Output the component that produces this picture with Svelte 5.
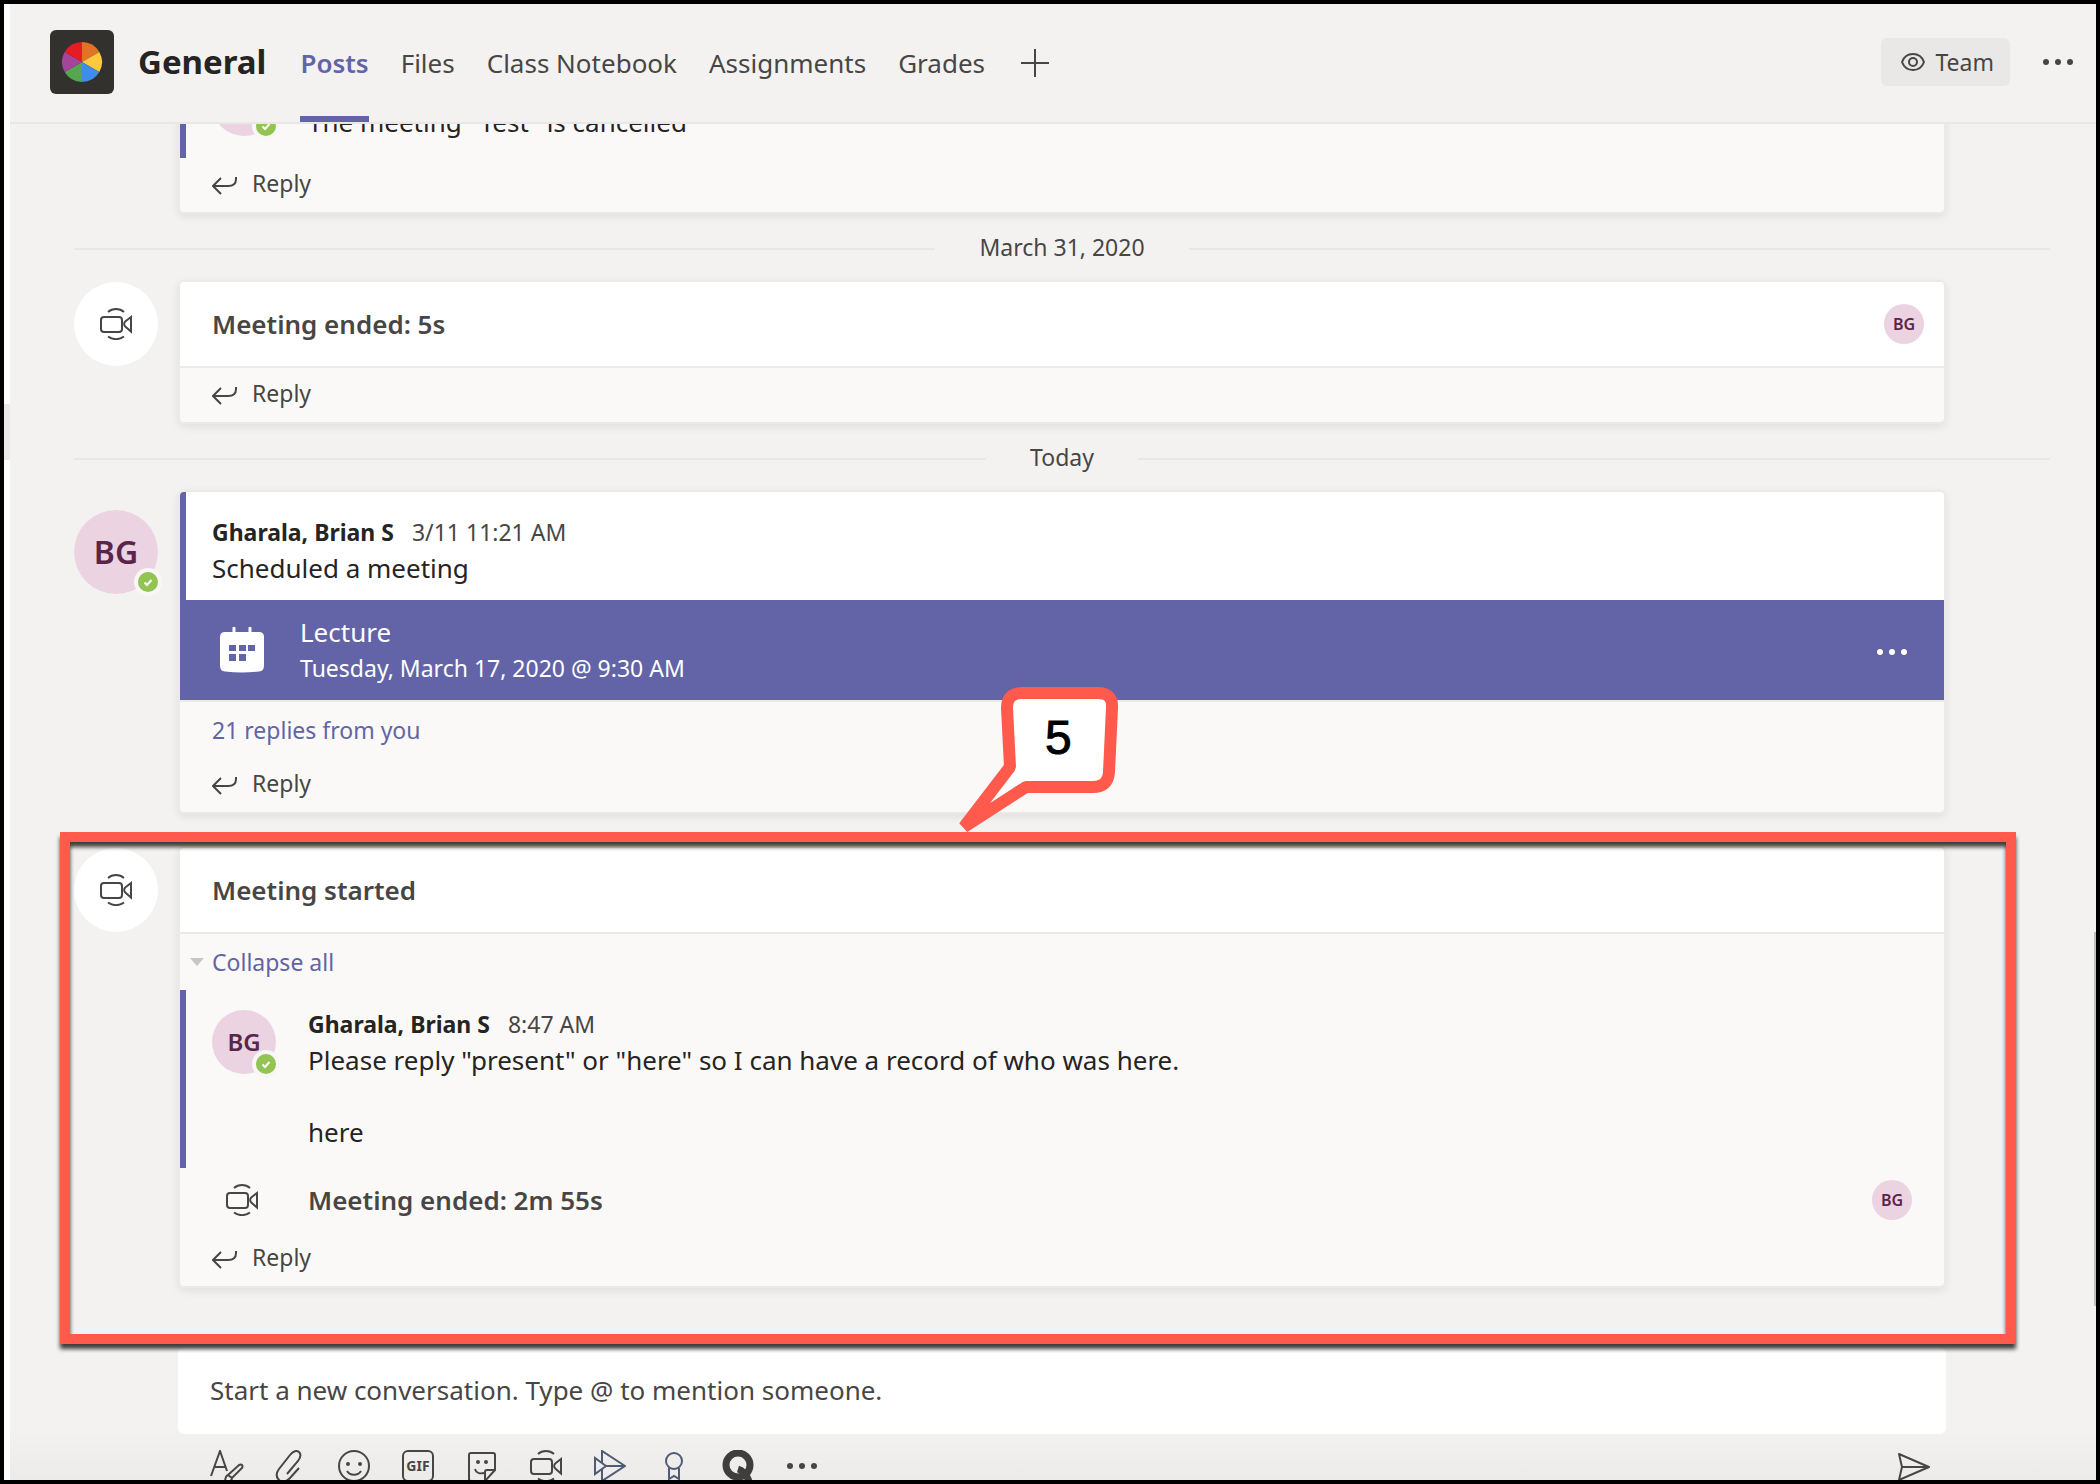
<script lang="ts">
	const tabs = ['Posts', 'Files', 'Class Notebook', 'Assignments', 'Grades'];
	let active = $state('Posts');
	let draft = $state('');
</script>

{#snippet dots()}
	<svg width="32" height="32" viewBox="0 0 32 32" fill="currentColor" aria-hidden="true">
		<circle cx="4" cy="16" r="3" />
		<circle cx="16" cy="16" r="3" />
		<circle cx="28" cy="16" r="3" />
	</svg>
{/snippet}

{#snippet camera()}
	<svg width="32" height="32" viewBox="0 0 32 32" class="line" aria-hidden="true">
		<rect x="1" y="9" width="21" height="15" rx="3" />
		<path d="M31 9v14.500l-5.500-4.700c-1.800-1.600-1.800-4 0-5.500z" />
		<path d="M8 4c4.500-4 11.500-4 16 0M8 28.500c4.500 3.500 11.500 3.500 16 0" />
	</svg>
{/snippet}

{#snippet badge()}
	<span class="badge">
		<svg width="20" height="20" viewBox="0 0 20 20" aria-label="Available">
			<circle cx="10" cy="10" r="10" fill="#92c353" />
			<path d="M6.500 10.500l2.500 2.500 4.500-5" fill="none" stroke="#fff" stroke-width="2" />
		</svg>
	</span>
{/snippet}

{#snippet reply()}
	<button class="reply">
		<svg width="25" height="20" viewBox="0 0 25 20" class="line" aria-hidden="true">
			<path d="M24 2v2c0 5-3 7-8 7H1M9 3L1 11l8 8" />
		</svg>
		Reply
	</button>
{/snippet}

{#snippet divider(label: string)}
	<div class="divider"><span>{label}</span></div>
{/snippet}

<div class="window">
	<div class="rail"><span></span></div>
	<main class="channel">
		<header>
			<svg class="logo" width="64" height="64" viewBox="0 0 64 64" aria-label="Team picture">
				<rect width="64" height="64" rx="6" fill="#33312e" />
				<path d="M32 32V12A20 20 0 0 1 49.300 22z" fill="#e27325" />
				<path d="M32 32L49.300 22A20 20 0 0 1 49.300 42z" fill="#ffc83d" />
				<path d="M32 32L49.300 42A20 20 0 0 1 32 52z" fill="#3e8ded" />
				<path d="M32 32V52A20 20 0 0 1 14.700 42z" fill="#55a64e" />
				<path d="M32 32L14.700 42A20 20 0 0 1 14.700 22z" fill="#a4459b" />
				<path d="M32 32L14.700 22A20 20 0 0 1 32 12z" fill="#e61b24" />
			</svg>
			<h1>General</h1>
			<nav>
				{#each tabs as tab}
					<button class:active={tab === active} onclick={() => (active = tab)}>{tab}</button>
				{/each}
				<button class="add" aria-label="Add a tab">
					<svg width="28" height="28" viewBox="0 0 28 28" class="line" aria-hidden="true">
						<path d="M14 0v28M0 14h28" />
					</svg>
				</button>
			</nav>
			<button class="team">
				<svg width="24" height="18" viewBox="0 0 24 18" class="line" aria-hidden="true">
					<path d="M1 9C3 3.500 7 1 12 1s9 2.500 11 8c-2 5.500-6 8-11 8S3 14.500 1 9z" />
					<circle cx="12" cy="9" r="4" />
				</svg>
				Team
			</button>
			<button class="more" aria-label="More options">{@render dots()}</button>
		</header>

		<section class="posts">
			<article class="post">
				<div class="card">
					<div class="comment">
						<div class="avatar medium">BG{@render badge()}</div>
						<p class="continued">The meeting "Test" is cancelled</p>
					</div>
					{@render reply()}
				</div>
			</article>

			{@render divider('March 31, 2020')}

			<article class="post">
				<div class="avatar system">{@render camera()}</div>
				<div class="card">
					<div class="title">
						<h2>Meeting ended: 5s</h2>
						<span class="avatar small">BG</span>
					</div>
					{@render reply()}
				</div>
			</article>

			{@render divider('Today')}

			<article class="post">
				<div class="avatar large">BG{@render badge()}</div>
				<div class="card">
					<div class="message">
						<p class="meta"><b>Gharala, Brian S</b> <time>3/11 11:21 AM</time></p>
						<p>Scheduled a meeting</p>
					</div>
					<div class="event">
						<svg width="44" height="46" viewBox="0 0 44 46" aria-hidden="true">
							<path
								d="M5 5h34q5 0 5 5v29q0 5-5 5.500-17 2-34 0-5-.5-5-5.500V10q0-5 5-5z"
								fill="#fff"
							/>
							<path d="M14 7V1M30 7V1" stroke="#fff" stroke-width="3" stroke-linecap="round" />
							<path
								d="M9 18h7v6H9zM19 18h7v6h-7zM28 18h7v6h-7zM9 27h7v7H9zM19 27h7v7h-7z"
								fill="#6264a7"
							/>
						</svg>
						<div>
							<h3>Lecture</h3>
							<time>Tuesday, March 17, 2020 @ 9:30 AM</time>
						</div>
						<button class="more" aria-label="Meeting options">{@render dots()}</button>
					</div>
					<a class="thread" href="#replies">21 replies from you</a>
					{@render reply()}
				</div>
			</article>

			<article class="post">
				<div class="avatar system">{@render camera()}</div>
				<div class="card">
					<div class="title">
						<h2>Meeting started</h2>
					</div>
					<a class="thread collapse" href="#collapse">Collapse all</a>
					<div class="comment">
						<div class="avatar medium">BG{@render badge()}</div>
						<div>
							<p class="meta"><b>Gharala, Brian S</b> <time>8:47 AM</time></p>
							<p>Please reply "present" or "here" so I can have a record of who was here.</p>
							<p><br /></p>
							<p>here</p>
						</div>
					</div>
					<div class="ended">
						{@render camera()}
						<h2>Meeting ended: 2m 55s</h2>
						<span class="avatar small">BG</span>
					</div>
					{@render reply()}
				</div>

				<div class="highlight"></div>
				<div class="callout">
					<svg width="166" height="150" viewBox="0 0 166 150" aria-hidden="true">
						<path
							d="M68 7H142Q157 7 156 22L153 86Q152 101 137 101H70L8 141L54 81L51 22Q51 7 66 7z"
							fill="#fff"
							stroke="#ff5a4b"
							stroke-width="12"
							stroke-linejoin="bevel"
						/>
					</svg>
					<span>5</span>
				</div>
			</article>
			<div class="thumb"></div>
		</section>

		<footer>
			<input
				bind:value={draft}
				aria-label="New conversation"
				placeholder="Start a new conversation. Type @ to mention someone."
			/>
			<div class="tools">
				<button aria-label="Format">
					<svg width="34" height="34" viewBox="0 0 34 34" class="line">
						<path d="M1 26L10 1l7 20M5 17h10" />
						<path d="M18 25L29 15q2-1 3 0 1 1 0 3L22 28zM18 25q-3 1-3 8 6 0 7-5z" />
					</svg>
				</button>
				<button aria-label="Attach">
					<svg width="32" height="34" viewBox="0 0 32 34" class="line">
						<path d="M25 18L16 28c-4 4-8 5-11 2s-3-7 0-11L16 5c3-4 7-5 9-3s2 5-1 9L13 24" />
					</svg>
				</button>
				<button aria-label="Emoji">
					<svg width="32" height="34" viewBox="0 0 32 34" class="line">
						<circle cx="16" cy="16" r="15" />
						<path d="M9 21c3 5 11 5 14 0" />
						<circle cx="10" cy="14" r="1" class="dot" />
						<circle cx="22" cy="14" r="1" class="dot" />
					</svg>
				</button>
				<button class="gif" aria-label="GIF"><span>GIF</span></button>
				<button aria-label="Sticker">
					<svg width="32" height="34" viewBox="0 0 32 34" class="line">
						<path d="M5 3h22q2 0 2 2v15L19 31H5q-2 0-2-2V5q0-2 2-2zM29 20h-8q-2 0-2 2v9" />
						<path d="M9 19c1 4 5 5 9 4" />
						<circle cx="12" cy="12" r="1" class="dot" />
						<circle cx="20" cy="12" r="1" class="dot" />
					</svg>
				</button>
				<button aria-label="Meet now">{@render camera()}</button>
				<button class="slate" aria-label="Stream">
					<svg width="32" height="34" viewBox="0 0 32 34" class="line">
						<path d="M8 13V1l23 15L8 31V19M1 8v16l11-8zM12 16h19" />
					</svg>
				</button>
				<button class="slate" aria-label="Praise">
					<svg width="32" height="34" viewBox="0 0 32 34" class="line">
						<circle cx="16" cy="11" r="8" />
						<path d="M11 18v11l5-3 5 3V18" />
					</svg>
				</button>
				<button aria-label="Quizlet">
					<svg width="32" height="34" viewBox="0 0 32 34" fill="none" stroke="#3f3e3d" stroke-width="7">
						<circle cx="16" cy="15" r="12" />
						<path d="M16 19q7 2 11 12" />
					</svg>
				</button>
				<button aria-label="More apps">{@render dots()}</button>
				<button class="send" aria-label="Send">
					<svg width="32" height="34" viewBox="0 0 32 34" class="line">
						<path d="M1 4l30 13L1 30l3-13zM4 17h27" stroke-linejoin="round" />
					</svg>
				</button>
			</div>
		</footer>
	</main>
</div>

<style>
	:global(body) {
		margin: 0;
	}

	.window {
		box-sizing: border-box;
		display: flex;
		height: 100vh;
		overflow: hidden;
		border: 4px solid #000;
		background: #f3f2f1;
		color: #252423;
		font-family: 'Noto Sans', 'Open Sans', sans-serif;
		font-size: 26px;
		line-height: 36px;
	}

	h1,
	h2,
	h3,
	p {
		margin: 0;
	}

	button {
		display: flex;
		align-items: center;
		padding: 0;
		border: 0;
		background: none;
		color: #484644;
		font: inherit;
		cursor: pointer;
	}

	svg {
		display: block;
		flex-shrink: 0;
	}

	.line {
		fill: none;
		stroke: currentColor;
		stroke-width: 2;
	}

	.dot {
		fill: currentColor;
	}

	.rail {
		width: 6px;
		background: #fff;
	}

	.rail span {
		display: block;
		height: 56px;
		margin-top: 400px;
		background: #ebeae8;
	}

	.channel {
		flex: 1;
		min-width: 0;
		display: flex;
		flex-direction: column;
	}

	header {
		position: relative;
		z-index: 1;
		box-sizing: border-box;
		flex-shrink: 0;
		display: flex;
		align-items: center;
		height: 120px;
		padding: 0 22px 0 40px;
		background: #f3f2f1;
		border-bottom: 2px solid #e8e7e5;
	}

	.logo {
		margin-bottom: 2px;
	}

	h1 {
		margin: 0 34px 2px 24px;
		font-size: 33px;
		line-height: 40px;
	}

	nav {
		flex: 1;
		align-self: stretch;
		display: flex;
		gap: 32px;
	}

	nav button {
		padding-top: 6px;
		border-bottom: 6px solid transparent;
	}

	nav .active {
		border-color: #6264a7;
		color: #6264a7;
		font-weight: 600;
	}

	nav .add {
		padding: 6px 4px 0;
	}

	.team {
		gap: 10px;
		height: 48px;
		margin-bottom: 2px;
		padding: 0 16px 0 20px;
		border-radius: 6px;
		background: #e9e8e6;
		font-size: 23px;
	}

	header .more {
		margin: 0 0 2px 32px;
	}

	.posts {
		position: relative;
		flex: 1;
		min-height: 0;
		display: flex;
		flex-direction: column;
		justify-content: flex-end;
		padding: 0 46px 62px 64px;
	}

	.thumb {
		position: absolute;
		right: 0;
		bottom: 42px;
		width: 2px;
		height: 374px;
		background: #c1c0bf;
	}

	.post {
		position: relative;
		flex-shrink: 0;
		display: grid;
		grid-template-columns: 106px 1fr;
		margin-right: 106px;
	}

	.post + .post {
		margin-top: 36px;
	}

	.card {
		grid-column: 2;
		border-radius: 4px;
		background: #faf9f8;
		box-shadow:
			0 0 0 2px #ebeae8,
			0 3px 8px 2px rgb(0 0 0 / 0.08);
	}

	.divider {
		flex-shrink: 0;
		display: flex;
		align-items: center;
		gap: 44px;
		height: 70px;
		color: #484644;
		font-size: 23px;
	}

	.divider::before,
	.divider::after {
		content: '';
		flex: 1;
		height: 2px;
		margin-top: 4px;
		background: #e8e7e5;
	}

	.avatar {
		position: relative;
		display: flex;
		flex-shrink: 0;
		align-items: center;
		justify-content: center;
		border-radius: 50%;
		background: #ebd3e1;
		color: #5a2548;
		font-weight: 600;
	}

	.system,
	.large {
		width: 84px;
		height: 84px;
	}

	.system {
		background: #fff;
		color: #484644;
	}

	.large {
		margin-top: 18px;
		font-size: 32px;
	}

	.medium {
		width: 64px;
		height: 64px;
		margin: 4px 32px 0 0;
		font-size: 24px;
	}

	.small {
		width: 40px;
		height: 40px;
		margin-left: auto;
		font-size: 16px;
	}

	.badge {
		position: absolute;
		right: -4px;
		bottom: -4px;
		border: 4px solid #f8f7f6;
		border-radius: 50%;
	}

	.large .badge {
		bottom: -2px;
	}

	.title {
		box-sizing: border-box;
		display: flex;
		align-items: center;
		height: 86px;
		padding: 0 20px 0 32px;
		border-bottom: 2px solid #ebeae8;
		border-radius: 4px 4px 0 0;
		background: #fff;
	}

	h2 {
		color: #484644;
		font-size: 26px;
		font-weight: 600;
	}

	.reply {
		box-sizing: border-box;
		gap: 15px;
		height: 54px;
		padding: 0 32px 4px;
		font-size: 23px;
	}

	.reply svg {
		margin-top: 4px;
	}

	.meta,
	.event time {
		font-size: 23px;
	}

	.meta time {
		margin-left: 12px;
		color: #484644;
	}

	.message {
		padding: 22px 26px 14px;
		border-left: 6px solid #6264a7;
		border-radius: 4px 4px 0 0;
		background: #fff;
	}

	.event {
		display: flex;
		align-items: center;
		gap: 36px;
		padding: 14px 36px 14px 40px;
		border-bottom: 2px solid #ebeae8;
		background: #6264a7;
		background-clip: padding-box;
		color: #fff;
	}

	.event h3 {
		font-size: 26px;
		font-weight: 400;
	}

	.event time {
		display: block;
	}

	.event .more {
		margin: 4px 0 0 auto;
		color: #fff;
	}

	.thread {
		display: block;
		padding: 10px 32px;
		color: #6264a7;
		font-size: 23px;
		text-decoration: none;
	}

	.collapse {
		display: flex;
		align-items: center;
		gap: 8px;
		padding-left: 10px;
	}

	.collapse::before {
		content: '';
		border: 7px solid transparent;
		border-top: 8px solid #c8c6c4;
		border-bottom: 0;
	}

	.comment {
		display: flex;
		align-items: flex-start;
		padding: 16px 26px 18px;
		border-left: 6px solid #6264a7;
	}

	.continued {
		padding-top: 36px;
	}

	.ended {
		display: flex;
		align-items: center;
		height: 64px;
		padding: 0 32px 0 46px;
		color: #484644;
	}

	.ended h2 {
		margin-left: 50px;
	}

	/* annotation over the last thread */
	.highlight {
		position: absolute;
		inset: -16px -72px -58px -14px;
		border: 10px solid #ff5a4b;
		filter: drop-shadow(0 5px 2px rgb(0 0 0 / 0.75));
		pointer-events: none;
	}

	.callout {
		position: absolute;
		top: -162px;
		left: 882px;
		pointer-events: none;
	}

	.callout span {
		position: absolute;
		top: 22px;
		left: 89px;
		color: #000;
		font: 48px/60px 'Liberation Sans', sans-serif;
		-webkit-text-stroke: 1px #000;
	}

	footer {
		box-sizing: border-box;
		flex-shrink: 0;
		height: 132px;
		padding: 0 150px 0 168px;
		overflow: hidden;
		background: linear-gradient(#f3f2f1 60%, #ecebea);
	}

	input {
		box-sizing: border-box;
		width: 100%;
		height: 86px;
		padding: 0 32px 2px;
		border: 0;
		border-radius: 6px;
		background: #fff;
		color: #252423;
		font: inherit;
	}

	input::placeholder {
		color: #484644;
		opacity: 1;
	}

	.tools {
		display: flex;
		align-items: flex-start;
		gap: 32px;
		padding: 16px 16px 0 32px;
	}

	.tools button {
		width: 32px;
	}

	.tools .slate {
		color: #4f5b75;
	}

	.gif {
		box-sizing: border-box;
		justify-content: center;
		height: 32px;
		border: 2px solid #484644;
		border-radius: 6px;
		font-size: 14px;
		font-weight: 700;
	}

	.tools .send {
		margin-left: auto;
	}
</style>
